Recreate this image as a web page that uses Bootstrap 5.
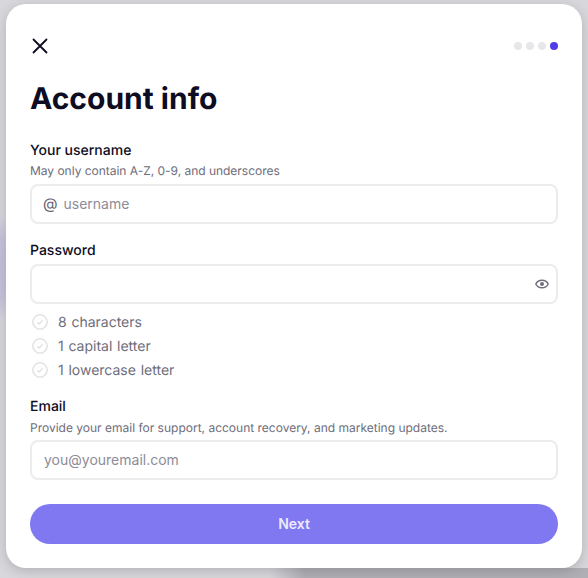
<!DOCTYPE html>
<html lang="en">
<head>
<meta charset="utf-8">
<title>Account info</title>
<link href="https://cdn.jsdelivr.net/npm/bootstrap@5.3.0/dist/css/bootstrap.min.css" rel="stylesheet">
<style>
html,body{height:100%;}
body{width:588px;height:578px;overflow:hidden;font-family:"Inter","Liberation Sans",sans-serif;color:#0d0c22;text-rendering:geometricPrecision;
  background:
   linear-gradient(90deg,transparent 0,transparent 270px,#b0afb5 304px,#b0afb5 100%) 0 100%/100% 10px no-repeat,
   radial-gradient(ellipse 14px 55px at 0 268px,#c3c1da 0,#c6c4dc 55%,transparent 100%),
   #d8d8dc;
  padding:4px 6px 10px;}
.sheet{width:576px;height:564px;background:#fff;border-radius:20px;box-shadow:0 3px 12px rgba(40,40,50,.22);padding:24px 24px 24px;}
.topline{height:36px;}
.closer{width:20px;height:20px;background:none;border:0;padding:0;line-height:0;}
.dots{gap:4px;}
.dot{width:8px;height:8px;border-radius:50%;background:#e7e7e9;}
.dot.on{background:#4f3ce6;}
.pagehead{font-size:30px;font-weight:700;line-height:40px;margin:15px 0 22px;color:#0d0c22;}
.fieldlabel{font-size:14px;font-weight:500;line-height:20px;margin:0;display:block;color:#0d0c22;}
.hinttext{font-size:12px;line-height:18px;color:#6e6d7a;margin:2px 0 3px;}
.group1 .hinttext{letter-spacing:-.02px;margin:1px 0 4px;}
.fieldbox{height:40px;border:2px solid #ececef;border-radius:8px;background:#fff;padding:0 12px;font-size:14px;gap:6px;margin-top:3px;}
.hinttext + .fieldbox{margin-top:0;}
.fieldbox input{border:0;outline:0;flex:1;min-width:0;padding:0 0 2px;font-size:14px;background:transparent;color:#0d0c22;font-family:inherit;}
.fieldbox input::placeholder{color:#8d8c98;opacity:1;}
.atsign{color:#5f5e6b;font-size:15px;line-height:1;margin-left:-1px;padding-bottom:2px;}
.fieldbox.withicon{padding-right:6px;}
.rules{margin:6px 0 0;padding:0;list-style:none;}
.rules li{height:24px;font-size:14px;color:#6e6d7a;gap:10px;padding-left:2px;word-spacing:.8px;}
.group1{margin-bottom:17px;}
.group2{margin-bottom:15px;}
.go{display:block;width:100%;height:40px;margin-top:24px;border:0;border-radius:20px;background:#8078f1;color:#ece9fd;font-size:14px;font-weight:600;font-family:inherit;padding:0 0 1px;}
</style>
</head>
<body>
<div class="sheet">
  <div class="topline d-flex justify-content-between align-items-center">
    <button class="closer" type="button" aria-label="Close">
      <svg width="20" height="20" viewBox="0 0 20 20" fill="none" stroke="#0d0c22" stroke-width="1.8" stroke-linecap="round"><path d="M3.5 3.5 16.5 16.5M16.5 3.5 3.5 16.5"/></svg>
    </button>
    <div class="dots d-flex">
      <span class="dot"></span><span class="dot"></span><span class="dot"></span><span class="dot on"></span>
    </div>
  </div>
  <h1 class="pagehead">Account info</h1>

  <div class="group1">
    <label class="fieldlabel" for="u">Your username</label>
    <div class="hinttext">May only contain A-Z, 0-9, and underscores</div>
    <div class="fieldbox d-flex align-items-center">
      <span class="atsign">@</span>
      <input id="u" type="text" placeholder="username">
    </div>
  </div>

  <div class="group2">
    <label class="fieldlabel" for="p">Password</label>
    <div class="fieldbox withicon d-flex align-items-center">
      <input id="p" type="password">
      <svg width="16" height="16" viewBox="0 0 16 16" fill="none" stroke="#6e6d7a" stroke-width="1.4"><path d="M1.8 8C3 5.6 5.2 4.2 8 4.2S13 5.6 14.2 8C13 10.4 10.8 11.8 8 11.8S3 10.4 1.8 8Z"/><circle cx="8" cy="8" r="2" fill="#6e6d7a" stroke="none"/></svg>
    </div>
    <ul class="rules">
      <li class="d-flex align-items-center"><svg width="16" height="16" viewBox="0 0 16 16" fill="none" stroke="#e2e2e5"><circle cx="8" cy="8" r="7.2" stroke-width="1.5"/><path d="M5.2 8.2 7.2 10 10.8 6.4" stroke-width="1.3"/></svg><span>8 characters</span></li>
      <li class="d-flex align-items-center"><svg width="16" height="16" viewBox="0 0 16 16" fill="none" stroke="#e2e2e5"><circle cx="8" cy="8" r="7.2" stroke-width="1.5"/><path d="M5.2 8.2 7.2 10 10.8 6.4" stroke-width="1.3"/></svg><span>1 capital letter</span></li>
      <li class="d-flex align-items-center"><svg width="16" height="16" viewBox="0 0 16 16" fill="none" stroke="#e2e2e5"><circle cx="8" cy="8" r="7.2" stroke-width="1.5"/><path d="M5.2 8.2 7.2 10 10.8 6.4" stroke-width="1.3"/></svg><span>1 lowercase letter</span></li>
    </ul>
  </div>

  <div>
    <label class="fieldlabel" for="e">Email</label>
    <div class="hinttext">Provide your email for support, account recovery, and marketing updates.</div>
    <div class="fieldbox d-flex align-items-center">
      <input id="e" type="text" placeholder="you@youremail.com">
    </div>
  </div>

  <button class="go" type="button">Next</button>
</div>
<script src="https://cdn.jsdelivr.net/npm/bootstrap@5.3.0/dist/js/bootstrap.bundle.min.js"></script>
</body>
</html>
